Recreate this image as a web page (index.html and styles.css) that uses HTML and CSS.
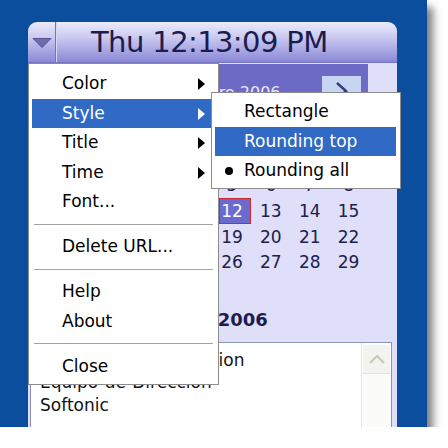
FILE: index.html
```html
<!DOCTYPE html>
<html>
<head>
<meta charset="utf-8">
<link rel="stylesheet" href="styles.css">
</head>
<body>
<div class="screen">
  <div class="widget">
    <div class="titlebar">
      <div class="drop">
        <svg width="20" height="10" viewBox="0 0 20 10"><path d="M1 0.5 L19 0.5 L10 9.5 Z" fill="#6f6cae" stroke="#55528f" stroke-width="1"/></svg>
      </div>
      <div class="clock">Thu 12:13:09 PM</div>
    </div>
    <div class="wbody">
      <div class="calendar">
        <div class="calhead">
          <span class="month">octubre 2006</span>
          <div class="next"><svg width="20" height="24" viewBox="0 0 20 24"><path d="M5 4 L14 12 L5 20" fill="none" stroke="#3a3a7a" stroke-width="2.5"/></svg></div>
        </div>
        <div class="grid">
          <span class="wd">L</span><span class="wd">M</span><span class="wd">X</span><span class="wd">J</span><span class="wd">V</span><span class="wd">S</span><span class="wd">D</span>
          <span></span><span></span><span></span><span></span><span></span><span></span><span>1</span>
          <span>2</span><span>3</span><span>4</span><span>5</span><span>6</span><span>7</span><span>8</span>
          <span>9</span><span>10</span><span>11</span><span class="today">12</span><span>13</span><span>14</span><span>15</span>
          <span>16</span><span>17</span><span>18</span><span>19</span><span>20</span><span>21</span><span>22</span>
          <span>23</span><span>24</span><span>25</span><span>26</span><span>27</span><span>28</span><span>29</span>
          <span>30</span><span>31</span><span></span><span></span><span></span><span></span><span></span>
        </div>
      </div>
      <div class="dateline">12 de octubre de 2006</div>
      <div class="textbox">
        <div class="text">
          <div>Gracias por su atencion</div>
          <div>Equipo de Dirección</div>
          <div>Softonic</div>
        </div>
        <div class="scroll">
          <div class="up"><svg width="18" height="10" viewBox="0 0 18 10"><path d="M2 9 L9 2 L16 9" fill="none" stroke="#c8c8b8" stroke-width="2"/></svg></div>
          <div class="track"></div>
        </div>
      </div>
    </div>
  </div>

  <div class="menu">
    <div class="item sub">Color</div>
    <div class="item sub active">Style</div>
    <div class="item sub">Title</div>
    <div class="item sub">Time</div>
    <div class="item">Font...</div>
    <div class="sep"></div>
    <div class="item">Delete URL...</div>
    <div class="sep"></div>
    <div class="item">Help</div>
    <div class="item">About</div>
    <div class="sep"></div>
    <div class="item">Close</div>
  </div>

  <div class="submenu">
    <div class="item">Rectangle</div>
    <div class="item active">Rounding top</div>
    <div class="item checked">Rounding all</div>
  </div>
</div>
</body>
</html>
```

FILE: styles.css
```css
html, body {
  margin: 0;
  padding: 0;
  background: #ffffff;
  font-family: "DejaVu Sans", "Liberation Sans", sans-serif;
}

.screen {
  position: relative;
  width: 427px;
  height: 427px;
  background: #0c4e9e;
  overflow: hidden;
  box-shadow: 6px 7px 8px rgba(0, 0, 0, 0.5);
  padding: 22px 0 0 28px;
  box-sizing: border-box;
}

.widget {
  width: 369px;
}

.titlebar {
  height: 41px;
  display: flex;
  border-radius: 9px 9px 0 0;
  background: linear-gradient(#ebebfb 0%, #c9c8f0 40%, #8a88d6 100%);
  border-bottom: 1px solid #7775c2;
  box-sizing: border-box;
}

.drop {
  width: 28px;
  display: flex;
  align-items: center;
  justify-content: center;
  border-right: 1px solid #7573b8;
  box-shadow: 1px 0 0 #d9d8f6;
  box-sizing: border-box;
  padding-top: 2px;
}

.clock {
  font-size: 29px;
  color: #1c1c4e;
  padding-left: 35px;
  line-height: 41px;
  letter-spacing: -0.6px;
}

.wbody {
  background: #dfdff9;
  height: 400px;
  padding-top: 1px;
}

.calendar {
  margin-left: 68px;
  width: 272px;
}

.calhead {
  height: 52px;
  background: #6d6ac6;
  position: relative;
  display: flex;
  align-items: flex-start;
  justify-content: center;
}

.month {
  color: #e8e8ff;
  font-size: 16px;
  margin-top: 19px;
  margin-right: 10px;
}

.next {
  position: absolute;
  right: 7px;
  top: 12px;
  width: 39px;
  height: 30px;
  background: #c6d6f2;
  display: flex;
  align-items: center;
  justify-content: center;
}

.grid {
  display: grid;
  grid-template-columns: repeat(7, 1fr);
  grid-auto-rows: 25.7px;
  margin-top: 5px;
  font-size: 17px;
  color: #20204a;
}

.grid span {
  display: flex;
  align-items: center;
  justify-content: center;
}

.grid .today {
  background: #6a6ad0;
  color: #ffffff;
  border: 1.5px solid #d02828;
  margin: 0 0 0 6px;
  padding-right: 6px;
}

.dateline {
  font-weight: bold;
  font-size: 18px;
  color: #1c1c52;
  margin: 8px 0 0 11px;
  height: 24px;
}

.textbox {
  margin: 9px 5px 0 2px;
  height: 120px;
  background: #ffffff;
  border: 1px solid #8a94b6;
  display: flex;
}

.text {
  flex: 1;
  font-size: 17px;
  color: #111111;
  line-height: 22.5px;
  padding: 6px 0 0 9px;
  word-spacing: 1px;
}

.scroll {
  width: 29px;
  display: flex;
  flex-direction: column;
  border-left: 1px solid #e6e6e0;
}

.up {
  height: 28px;
  margin: 2px 1px 0 1px;
  background: #f3f3ef;
  border-bottom: 1px solid #e2e2dc;
  display: flex;
  align-items: center;
  justify-content: center;
}

.track {
  flex: 1;
  background: #fbfbf9;
}

.menu {
  position: absolute;
  left: 28px;
  top: 63px;
  width: 191px;
  height: 322px;
  box-sizing: border-box;
  background: #ffffff;
  border: 1px solid #8c8c8c;
  padding: 5px 3px 3px 3px;
  font-size: 17px;
  color: #000000;
}

.item {
  height: 29.5px;
  line-height: 29.5px;
  padding-left: 30px;
  position: relative;
}

.item.sub::after {
  content: "";
  position: absolute;
  right: 10px;
  top: 9px;
  border-left: 7px solid #000000;
  border-top: 6px solid transparent;
  border-bottom: 6px solid transparent;
}

.item.active {
  background: #316ac5;
  color: #ffffff;
}

.item.sub.active::after {
  border-left-color: #ffffff;
}

.sep {
  height: 15.5px;
  display: flex;
  align-items: center;
  margin: 0 2px;
}

.sep::before {
  content: "";
  flex: 1;
  height: 1px;
  background: #a3a3a3;
}

.submenu {
  position: absolute;
  left: 211px;
  top: 92px;
  width: 190px;
  height: 97px;
  box-sizing: border-box;
  background: #ffffff;
  border: 1px solid #8c8c8c;
  padding: 4px 4px 3px 3px;
  font-size: 17px;
  color: #000000;
}

.submenu .item {
  padding-left: 29px;
}

.submenu .item.checked::before {
  content: "";
  position: absolute;
  left: 10px;
  top: 11px;
  width: 8px;
  height: 8px;
  border-radius: 50%;
  background: #000000;
}
```
